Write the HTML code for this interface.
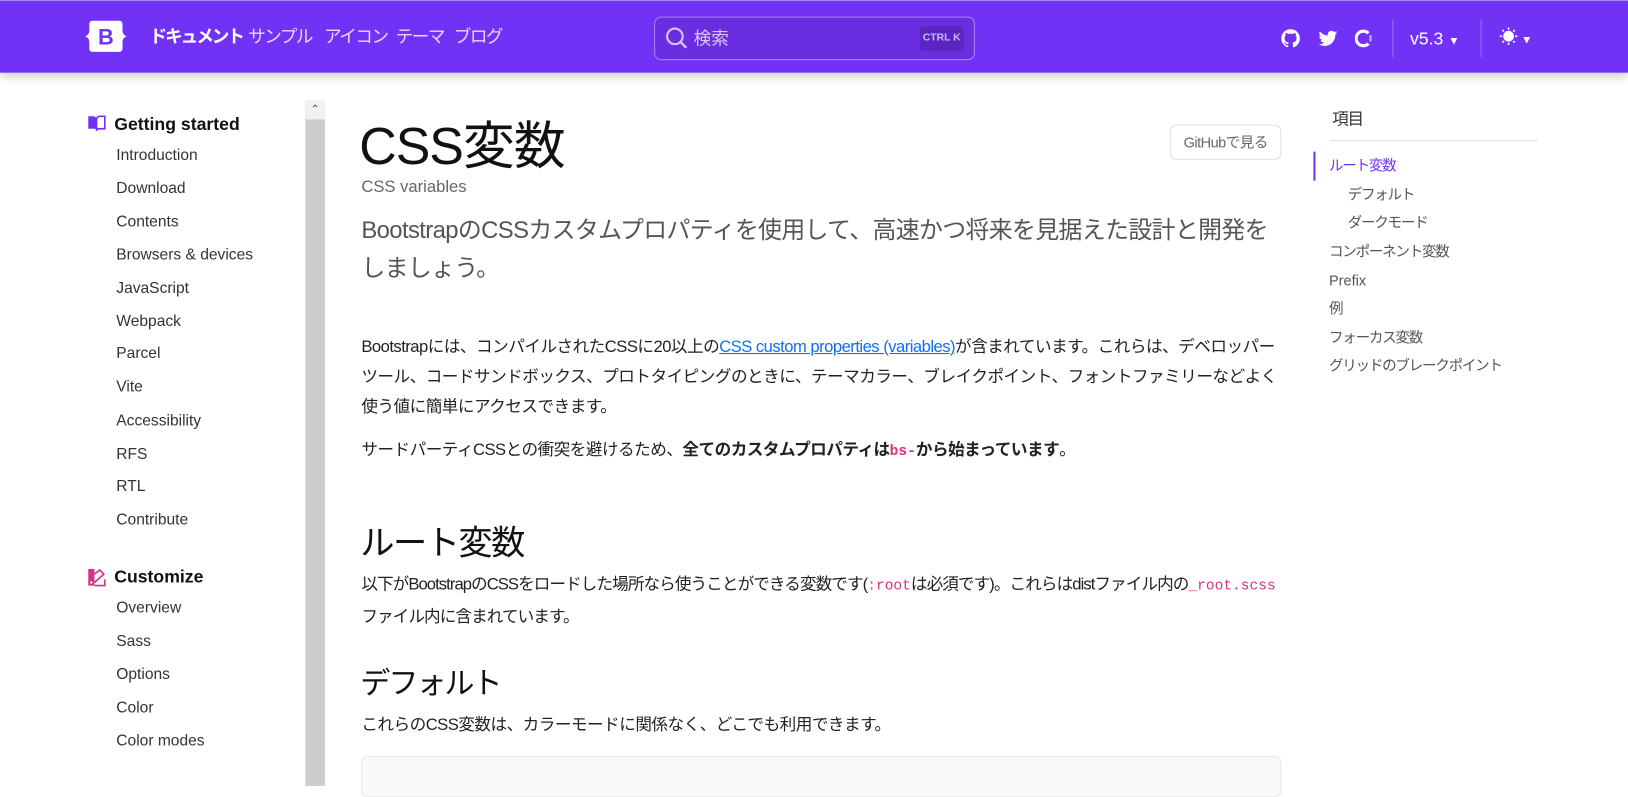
<!DOCTYPE html>
<html><head><meta charset="utf-8"><style>
*{box-sizing:border-box;margin:0;padding:0}
html,body{width:1628px;height:764px;overflow:hidden;background:#fff}
#w{position:absolute;left:0;top:0;width:1568px;height:736px;transform:scale(1.03827);transform-origin:0 0;font-family:"Liberation Sans","Noto Sans CJK JP",sans-serif;color:#212529}
.nav{position:absolute;left:0;top:0;width:1568px;height:70px;background:#7232f6;box-shadow:0 4px 8px rgba(0,0,0,.18);border-top:1px solid #a88af5}
.nav a{position:absolute;top:24px;color:#e4d9ff;font-size:17px;letter-spacing:-1.5px;white-space:nowrap;line-height:22px}
.abs{position:absolute;white-space:nowrap}
.side a{position:absolute;left:112px;font-size:15px;color:#333;white-space:nowrap;line-height:18px}
.side .h{left:110px;font-weight:bold;font-size:17px;color:#111;line-height:20px}
.toc div{position:absolute;font-size:14px;color:#555;white-space:nowrap;line-height:18px;letter-spacing:-1.2px}
code{font-family:"Liberation Mono",monospace;color:#d63384;font-size:14px;letter-spacing:0}
.p{position:absolute;left:348px;font-size:16px;line-height:29px;color:#222;width:890px;letter-spacing:-0.5px}
</style></head><body><div id="w">
<div class="nav">
 <svg class="abs" style="left:82px;top:16px" width="40" height="36" viewBox="0 0 40 36"><path d="M7 3h26a3 3 0 0 1 3 3v6c0 3 1 5 4 6c-3 1-4 3-4 6v6a3 3 0 0 1-3 3H7a3 3 0 0 1-3-3v-6c0-3-1-5-4-6c3-1 4-3 4-6V6a3 3 0 0 1 3-3z" fill="#fff"/><text x="20" y="26" text-anchor="middle" font-size="21" font-weight="bold" fill="#7232f6" font-family="Liberation Sans">B</text></svg>
 <a style="left:144px;color:#fff;font-weight:bold;letter-spacing:-2px">ドキュメント</a>
 <a style="left:239px">サンプル</a>
 <a style="left:312px">アイコン</a>
 <a style="left:381px">テーマ</a>
 <a style="left:437px">ブログ</a>
 <div class="abs" style="left:630px;top:15px;width:309px;height:42px;border:1px solid #a585f6;border-radius:7px;background:#6a2ee0"></div>
 <svg class="abs" style="left:641px;top:25px" width="22" height="22" viewBox="0 0 22 22"><circle cx="9" cy="9" r="7.5" stroke="#d8c8ff" stroke-width="2" fill="none"/><path d="M14.5 14.5L20 20" stroke="#d8c8ff" stroke-width="2.2"/></svg>
 <a style="left:668px;top:26px;font-size:17px;color:#d8c8ff;letter-spacing:0">検索</a>
 <div class="abs" style="left:886px;top:24px;width:42px;height:24px;background:#5a25c0;border-radius:4px;color:#cbb8ff;font-size:10px;line-height:24px;text-align:center;font-weight:bold">CTRL K</div>
 <svg class="abs" style="left:1234px;top:27px" width="18" height="18" viewBox="0 0 16 16"><path fill="#fff" d="M8 0C3.58 0 0 3.58 0 8c0 3.54 2.290 6.530 5.470 7.59.4.07.55-.17.55-.38v-1.33c-2.23.48-2.7-1.07-2.7-1.070-.36-.93-.89-1.17-.89-1.17-.73-.5.06-.49.06-.49.8.06 1.23.83 1.23.83.71 1.22 1.87.87 2.33.66.07-.52.28-.87.51-1.07-1.78-.2-3.64-.89-3.64-3.95 0-.87.31-1.59.82-2.15-.08-.2-.36-1.020.08-2.12 0 0 .67-.21 2.2.82a7.5 7.5 0 0 1 4 0c1.53-1.04 2.2-.82 2.2-.82.44 1.1.16 1.92.08 2.12.51.56.82 1.27.82 2.15 0 3.07-1.87 3.75-3.65 3.95.29.25.54.73.54 1.48v2.2c0 .21.15.46.55.38A8 8 0 0 0 16 8c0-4.42-3.58-8-8-8z"/></svg>
 <svg class="abs" style="left:1270px;top:28px" width="18" height="16" viewBox="0 0 16 14"><path fill="#fff" d="M5 13.5c6 0 9.3-5 9.3-9.3v-.4A6.7 6.7 0 0 0 16 2a6.5 6.5 0 0 1-1.9.5A3.3 3.3 0 0 0 15.6.7a6.6 6.6 0 0 1-2.1.8A3.3 3.3 0 0 0 7.9 4.5 9.3 9.3 0 0 1 1.1 1 3.3 3.3 0 0 0 2.1 5.4a3.3 3.3 0 0 1-1.5-.4 3.3 3.3 0 0 0 2.6 3.2 3.3 3.3 0 0 1-1.5.1 3.3 3.3 0 0 0 3.1 2.3A6.6 6.6 0 0 1 0 11.9a9.3 9.3 0 0 0 5 1.5"/></svg>
 <svg class="abs" style="left:1305px;top:27px" width="18" height="18" viewBox="0 0 18 18"><path d="M13 4A7 7 0 1 0 13 14" stroke="#fff" stroke-width="3" fill="none"/><path d="M15 6v6" stroke="#c9b4ff" stroke-width="2"/></svg>
 <div class="abs" style="left:1341px;top:18px;width:1px;height:36px;background:#9a73f5"></div>
 <a style="left:1358px;top:26px;font-size:17px;color:#fff;letter-spacing:0">v5.3 <span style="font-size:11px">▼</span></a>
 <div class="abs" style="left:1426px;top:18px;width:1px;height:36px;background:#9a73f5"></div>
 <a style="left:1444px;top:24px;color:#fff;font-size:18px;letter-spacing:0">☀<span style="font-size:11px"> ▼</span></a>
</div>

<div class="side">
 <svg class="abs" style="left:84px;top:111px" width="18" height="16" viewBox="0 0 18 16"><path d="M1 1h5a3 3 0 0 1 3 3v11a2 2 0 0 0-2-2H1z" fill="#7232f6"/><path d="M17 1h-5a3 3 0 0 0-3 3v11a2 2 0 0 1 2-2h6z" fill="none" stroke="#7232f6" stroke-width="1.6"/></svg>
 <a class="h" style="top:110px">Getting started</a>
 <a style="top:141px">Introduction</a><a style="top:173px">Download</a><a style="top:205px">Contents</a><a style="top:237px">Browsers &amp; devices</a><a style="top:269px">JavaScript</a><a style="top:301px">Webpack</a><a style="top:332px">Parcel</a><a style="top:364px">Vite</a><a style="top:397px">Accessibility</a><a style="top:429px">RFS</a><a style="top:460px">RTL</a><a style="top:492px">Contribute</a>
 <svg class="abs" style="left:84px;top:547px" width="18" height="18" viewBox="0 0 18 18"><rect x="1" y="1" width="6" height="16" fill="#d63384"/><path d="M7 6l5-4 4 4-9 8M7 17h10v-6" fill="none" stroke="#d63384" stroke-width="1.6"/><circle cx="4" cy="14" r="1.2" fill="#fff"/></svg>
 <a class="h" style="top:546px">Customize</a>
 <a style="top:577px">Overview</a><a style="top:609px">Sass</a><a style="top:641px">Options</a><a style="top:673px">Color</a><a style="top:705px">Color modes</a>
</div>
<div class="abs" style="left:294px;top:97px;width:19px;height:660px;background:#cdcdcd"></div>
<div class="abs" style="left:294px;top:97px;width:19px;height:18px;background:#f1f1f1;color:#555;font-size:11px;text-align:center;line-height:18px">⌃</div>

<div class="abs" style="left:346px;top:108px;font-size:50px;color:#111;line-height:66px;letter-spacing:-1px">CSS変数</div>
<div class="abs" style="left:348px;top:172px;font-size:16px;color:#666">CSS variables</div>
<div class="abs" style="left:1127px;top:120px;width:107px;height:34px;border:1px solid #dee2e6;border-radius:6px;font-size:14px;color:#666;text-align:center;line-height:32px;letter-spacing:-0.5px">GitHubで見る</div>
<div class="p" style="top:203px;font-size:23px;line-height:37px;color:#555;letter-spacing:-0.6px;width:888px">BootstrapのCSSカスタムプロパティを使用して、高速かつ将来を見据えた設計と開発をしましょう。</div>
<div class="p" style="top:320px">Bootstrapには、コンパイルされたCSSに20以上の<span style="color:#0d6efd;text-decoration:underline">CSS custom properties (variables)</span>が含まれています。これらは、デベロッパーツール、コードサンドボックス、プロトタイピングのときに、テーマカラー、ブレイクポイント、フォントファミリーなどよく使う値に簡単にアクセスできます。</div>
<div class="p" style="top:419px">サードパーティCSSとの衝突を避けるため、<b>全てのカスタムプロパティは<code>bs-</code>から始まっています</b>。</div>
<div class="abs" style="left:347px;top:498px;font-size:33px;color:#111;line-height:50px;letter-spacing:-1.5px">ルート変数</div>
<div class="p" style="top:549px;letter-spacing:-0.9px">以下がBootstrapのCSSをロードした場所なら使うことができる変数です(<code>:root</code>は必須です)。これらはdistファイル内の<code>_root.scss</code>ファイル内に含まれています。</div>
<div class="abs" style="left:347px;top:636px;font-size:29px;color:#111;line-height:46px;letter-spacing:-2px">デフォルト</div>
<div class="p" style="top:684px">これらのCSS変数は、カラーモードに関係なく、どこでも利用できます。</div>
<div class="abs" style="left:348px;top:728px;width:886px;height:40px;border:1px solid #e6e8ea;border-radius:6px;background:#f8f9fa"></div>

<div class="toc">
 <div style="left:1283px;top:106px;font-size:16px;color:#333;line-height:20px">項目</div>
 <div style="left:1281px;top:135px;width:200px;height:1px;background:#ddd"></div>
 <div style="left:1265px;top:146px;width:2px;height:28px;background:#7232f6"></div>
 <div style="left:1280px;top:150px;color:#7232f6">ルート変数</div>
 <div style="left:1298px;top:178px">デフォルト</div>
 <div style="left:1298px;top:205px">ダークモード</div>
 <div style="left:1280px;top:233px">コンポーネント変数</div>
 <div style="left:1280px;top:261px;letter-spacing:0">Prefix</div>
 <div style="left:1280px;top:288px">例</div>
 <div style="left:1280px;top:316px">フォーカス変数</div>
 <div style="left:1280px;top:343px">グリッドのブレークポイント</div>
</div>
</div></body></html>
